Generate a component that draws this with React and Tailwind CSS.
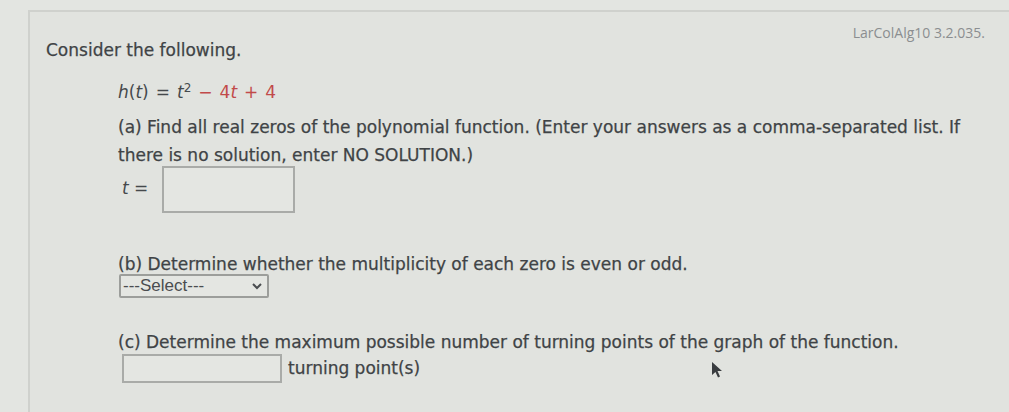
export default function App() {
  const txt = "text-[17px] text-[#3f4346] font-['DejaVu_Sans',sans-serif] [-webkit-text-stroke:0.25px_#3f4346]";
  return (
    <div className="w-[1009px] h-[412px] overflow-hidden bg-[#e3e5e1] relative">
      <div className="ml-[28px] mt-[10px] h-[402px] border-l-2 border-t-2 border-[#cfd1cd] bg-[#e1e3df] pl-[16px] pr-[24px] pt-[10px]">
        <div className="flex justify-end text-[14px] text-[#8b8e90] font-['Open_Sans',sans-serif]">LarColAlg10 3.2.035.</div>
        <div className={`${txt} -mt-[5px]`}>Consider the following.</div>
        <div className="ml-[72px] mt-[18px] text-[17px] text-[#45494c] font-['DejaVu_Sans',sans-serif] leading-[20px] flex items-baseline">
          <i>h</i>(<i>t</i>)<span className="mx-[7px]">=</span><i>t</i><sup className="text-[12px]">2</sup>
          <span className="text-[#c14a4a] flex items-baseline"><span className="mx-[7px]">−</span>4<i>t</i><span className="mx-[7px]">+</span>4</span>
        </div>
        <div className="ml-[72px] mt-[11px]">
          <p className={`${txt} leading-[28px] max-w-[864px]`}>
            (a) Find all real zeros of the polynomial function. (Enter your answers as a comma-separated list. If there is no solution, enter NO SOLUTION.)
          </p>
          <div className="flex items-center gap-[14px] -mt-[3px] ml-[4px]">
            <span className="text-[17px] text-[#45494c] font-['DejaVu_Sans',sans-serif]"><i>t</i> =</span>
            <div className="w-[133px] h-[47px] border-2 border-[#a9aba8] bg-[#e4e6e2]" />
          </div>
          <p className={`${txt} mt-[41px] leading-[20px]`}>
            (b) Determine whether the multiplicity of each zero is even or odd.
          </p>
          <div className="mt-[0px] ml-[1px] w-[150px] h-[24px] border-2 border-[#9c9e9b] rounded-[2px] flex items-center justify-between pl-[2px] pr-[4px] bg-[#e4e6e2]">
            <span className="text-[17px] leading-[20px] text-[#4a4d50] font-['Liberation_Sans',sans-serif]">---Select---</span>
            <svg width="12" height="10" viewBox="0 0 12 10"><path d="M2 3l4 4 4-4" fill="none" stroke="#4a4d50" strokeWidth="2" /></svg>
          </div>
          <p className={`${txt} mt-[34px] leading-[20px]`}>
            (c) Determine the maximum possible number of turning points of the graph of the function.
          </p>
          <div className="flex items-center gap-[6px] mt-[2px] ml-[4px]">
            <div className="w-[160px] h-[29px] border-2 border-[#a9aba8] bg-[#e4e6e2]" />
            <span className={`${txt} leading-[20px]`}>turning point(s)</span>
          </div>
        </div>
      </div>
      <svg className="absolute left-[711px] top-[361px]" width="14" height="18" viewBox="0 0 14 18">
        <path d="M1 1l0 13 3.5-3 2.5 5.5 2-1-2.5-5.5 4.5 0z" fill="#3a3d40" />
      </svg>
    </div>
  );
}
